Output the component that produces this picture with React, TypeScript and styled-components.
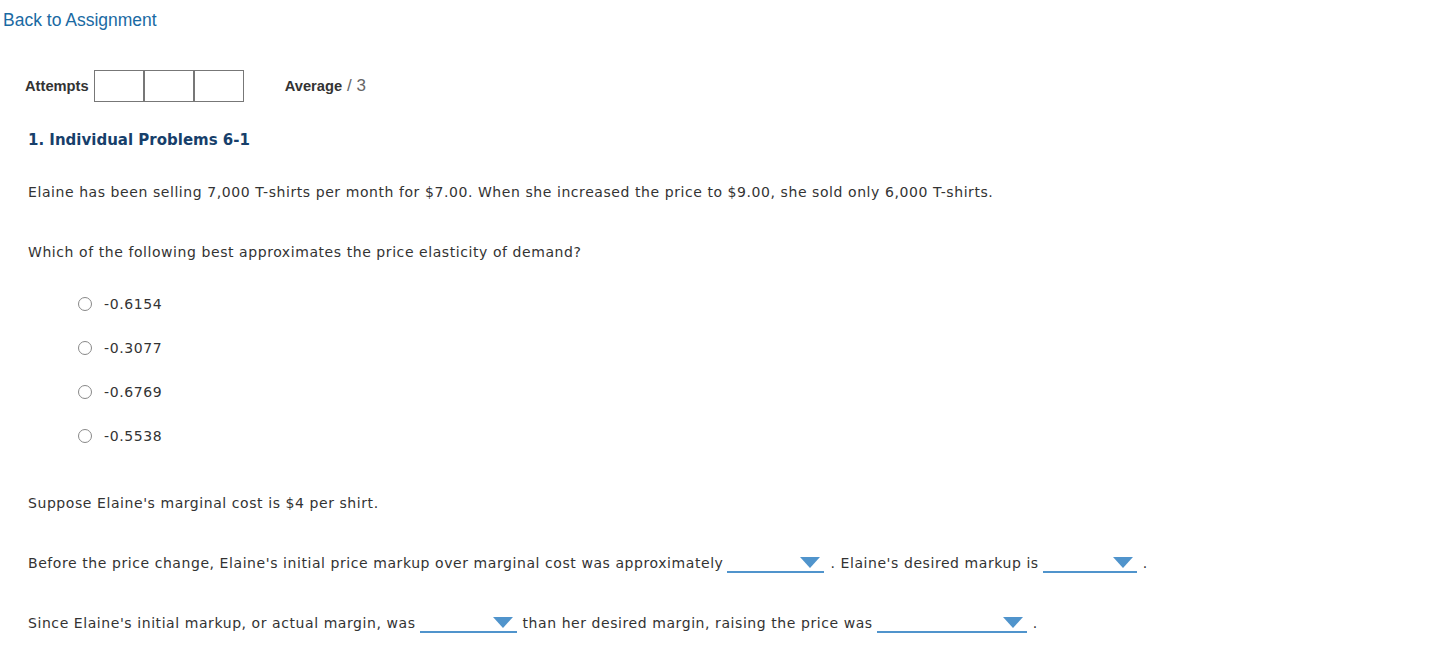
import React from "react";
import styled, { createGlobalStyle } from "styled-components";

const Global = createGlobalStyle`
  html, body { margin: 0; padding: 0; background: #fff; }
  body { font-family: "DejaVu Sans", Verdana, sans-serif; color: #333; }
`;

const Page = styled.div`
  display: flex;
  flex-direction: column;
  padding: 9px 0 0 0;
`;

const BackLink = styled.a`
  font-family: "Liberation Sans", Arial, sans-serif;
  font-size: 17.5px;
  color: #1a6aa3;
  text-decoration: none;
  margin-left: 3px;
  line-height: 22px;
`;

const AttemptsRow = styled.div`
  display: flex;
  align-items: center;
  margin: 39px 0 0 25px;
  height: 32px;
`;

const Label = styled.span`
  font-family: "Liberation Sans", Arial, sans-serif;
  font-size: 14.7px;
  font-weight: bold;
  color: #333;
`;

const Boxes = styled.div`
  display: flex;
  margin-left: 5px;
`;

const Box = styled.div`
  width: 48px;
  height: 30px;
  border: 1px solid #777;
`;

const Average = styled(Label)`
  margin-left: 41px;
`;

const Slash = styled.span`
  font-family: "Liberation Sans", Arial, sans-serif;
  font-size: 17px;
  font-weight: normal;
  color: #666;
  margin-left: 5px;
`;

const Content = styled.div`
  display: flex;
  flex-direction: column;
  padding-left: 28px;
`;

const Heading = styled.h2<{ $top: number }>`
  font-family: "DejaVu Sans", Verdana, sans-serif;
  font-size: 15px;
  font-weight: bold;
  color: #173f6b;
  margin: ${(p) => p.$top}px 0 0 0;
  line-height: 20px;
`;

const Para = styled.p<{ $top: number }>`
  font-size: 14px;
  letter-spacing: 0.57px;
  line-height: 20px;
  margin: ${(p) => p.$top}px 0 0 0;
  color: #333;
  display: flex;
  align-items: center;
  white-space: pre;
`;

const Options = styled.div`
  display: flex;
  flex-direction: column;
  gap: 24px;
  margin: 32px 0 0 50px;
`;

const Option = styled.label`
  display: flex;
  align-items: center;
  font-size: 14px;
  letter-spacing: 0.6px;
  line-height: 20px;
  color: #333;
`;

const Radio = styled.span`
  width: 14px;
  height: 14px;
  border: 1px solid #888;
  border-radius: 50%;
  margin-right: 12px;
  box-sizing: border-box;
  background: #fff;
`;

const Select = styled.span<{ $w: number }>`
  display: inline-flex;
  justify-content: flex-end;
  align-items: flex-start;
  width: ${(p) => p.$w}px;
  height: 18px;
  border-bottom: 2px solid #5094cc;
  margin: 0 6px 0 4px;
  position: relative;
  top: 1px;
  box-sizing: border-box;
  padding-right: 4px;
`;

const Caret = () => (
  <svg width="20" height="12" viewBox="0 0 20 12" style={{ marginTop: 2 }}>
    <polygon points="0,0 20,0 10,11" fill="#5094cc" />
  </svg>
);

export default function App() {
  return (
    <>
      <Global />
      <Page>
        <BackLink href="#">Back to Assignment</BackLink>
        <AttemptsRow>
          <Label>Attempts</Label>
          <Boxes>
            <Box />
            <Box />
            <Box />
          </Boxes>
          <Average>
            Average<Slash>/ 3</Slash>
          </Average>
        </AttemptsRow>
        <Content>
          <Heading $top={28}>1. Individual Problems 6-1</Heading>
          <Para $top={32}>
            Elaine has been selling 7,000 T-shirts per month for $7.00. When she increased the price to $9.00, she sold only 6,000 T-shirts.
          </Para>
          <Para $top={40}>Which of the following best approximates the price elasticity of demand?</Para>
          <Options>
            {["-0.6154", "-0.3077", "-0.6769", "-0.5538"].map((v) => (
              <Option key={v}>
                <Radio />
                {v}
              </Option>
            ))}
          </Options>
          <Para $top={47}>Suppose Elaine's marginal cost is $4 per shirt.</Para>
          <Para $top={40}>
            Before the price change, Elaine's initial price markup over marginal cost was approximately
            <Select $w={97}>
              <Caret />
            </Select>
            . Elaine's desired markup is
            <Select $w={94}>
              <Caret />
            </Select>
            .
          </Para>
          <Para $top={40}>
            Since Elaine's initial markup, or actual margin, was
            <Select $w={97}>
              <Caret />
            </Select>
            than her desired margin, raising the price was
            <Select $w={150}>
              <Caret />
            </Select>
            .
          </Para>
        </Content>
      </Page>
    </>
  );
}
